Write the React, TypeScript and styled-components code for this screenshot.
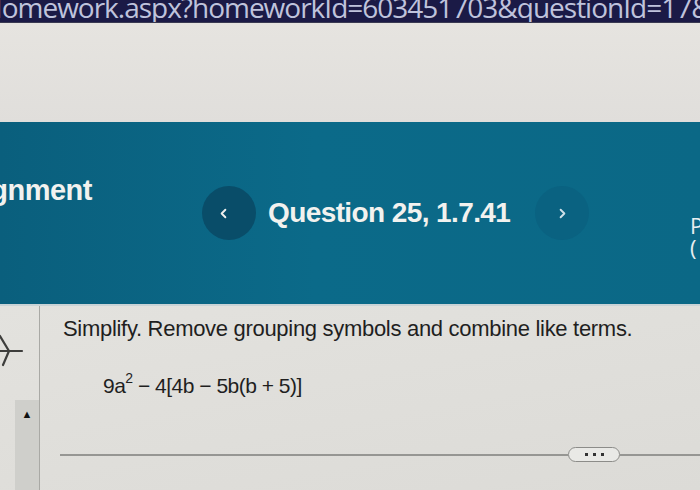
import styled, { createGlobalStyle } from 'styled-components'
import { ChevronLeft, ChevronRight } from 'lucide-react'

const GlobalStyle = createGlobalStyle`
	html, body {
		margin: 0;
		padding: 0;
	}
	body {
		width: 700px;
		height: 490px;
		overflow: hidden;
		background: #dfded9;
		font-family: 'Liberation Sans', Arial, sans-serif;
	}
`

export default function App() {
	return (
		<Root>
			<GlobalStyle />
			<UrlBar>
				<UrlText>Homework.aspx?homeworkId=603451703&amp;questionId=17&amp;flushed</UrlText>
			</UrlBar>
			<GrayBand />
			<Banner>
				<Title>Assignment</Title>
				<Nav>
					<NavButton $active>
						<ChevronLeft size={15} strokeWidth={3} />
					</NavButton>
					<QuestionTitle>Question 25, 1.7.41</QuestionTitle>
					<NavButton>
						<ChevronRight size={15} strokeWidth={3} />
					</NavButton>
				</Nav>
				<EdgeInfo>P (</EdgeInfo>
			</Banner>
			<Body>
				<Sidebar>
					<BackArrow width="24" height="34" viewBox="0 0 24 34">
						<path d="M0 2 L9 17 L3 31 M0 17 L22 17" fill="none" stroke="#3e3e3c" strokeWidth="2.2" strokeLinecap="round" />
					</BackArrow>
					<Track>
						<TrackArrow>▲</TrackArrow>
					</Track>
				</Sidebar>
				<Content>
					<Prompt>Simplify. Remove grouping symbols and combine like terms.</Prompt>
					<Expression>
						9a<sup>2</sup> − 4[4b − 5b(b + 5)]
					</Expression>
					<Divider>
						<Rule />
						<MoreButton>
							<Dot />
							<Dot />
							<Dot />
						</MoreButton>
						<Rule $tail />
					</Divider>
				</Content>
			</Body>
		</Root>
	)
}

const Root = styled.div`
	width: 700px;
	height: 490px;
	display: flex;
	flex-direction: column;
	overflow: hidden;
`

const UrlBar = styled.div`
	height: 22px;
	flex-shrink: 0;
	background: #1b1a46;
	overflow: hidden;
	border-bottom: 1px solid #3a3a52;
`

const UrlText = styled.div`
	margin: -7px 0 0 0;
	text-indent: -18px;
	font-family: 'Open Sans', sans-serif;
	font-size: 28px;
	line-height: 28px;
	letter-spacing: -1px;
	white-space: nowrap;
	color: #bfc3dc;
`

const GrayBand = styled.div`
	height: 99px;
	flex-shrink: 0;
	background: linear-gradient(180deg, #e6e4e0, #e0dedb);
`

const Banner = styled.div`
	height: 182px;
	flex-shrink: 0;
	display: flex;
	align-items: flex-start;
	background: linear-gradient(90deg, #0a5f7d, #0b6a89 45%, #0b6886);
	color: #f2f2ef;
	overflow: hidden;
	border-bottom: 2px solid #c9d3d6;
`

const Title = styled.div`
	width: 202px;
	flex-shrink: 0;
	margin-top: 52px;
	text-indent: -69px;
	font-size: 29px;
	line-height: 32px;
	font-weight: 700;
	letter-spacing: -0.5px;
	white-space: nowrap;
	overflow: hidden;
`

const Nav = styled.div`
	display: flex;
	align-items: center;
	margin-top: 64px;
`

const NavButton = styled.div<{ $active?: boolean }>`
	width: 54px;
	height: 54px;
	border-radius: 50%;
	display: flex;
	align-items: center;
	justify-content: center;
	background: ${(p) => (p.$active ? '#094d69' : '#0a6281')};
	color: ${(p) => (p.$active ? '#f0f0ee' : '#cfe0e8')};
	svg {
		margin-left: ${(p) => (p.$active ? '-12px' : '0')};
	}
`

const QuestionTitle = styled.div`
	margin: 0 25px 0 12px;
	font-size: 28px;
	line-height: 32px;
	font-weight: 700;
	letter-spacing: -0.6px;
	white-space: nowrap;
`

const EdgeInfo = styled.div`
	margin: 92px 0 0 auto;
	width: 10px;
	padding-left: 2px;
	font-family: 'Open Sans', sans-serif;
	font-size: 22px;
	line-height: 22px;
	color: #e8eef0;
	word-break: break-all;
`

const Body = styled.div`
	flex: 1;
	display: flex;
	background: linear-gradient(170deg, #e3e2de, #dcdbd7);
`

const Sidebar = styled.div`
	width: 39px;
	flex-shrink: 0;
	display: flex;
	flex-direction: column;
	border-right: 1px solid #a9a9a5;
`

const BackArrow = styled.svg`
	margin-top: 28px;
	display: block;
`

const Track = styled.div`
	margin: 32px 0 0 15px;
	flex: 1;
	background: #cfcfcb;
	display: flex;
	justify-content: center;
`

const TrackArrow = styled.span`
	margin-top: 8px;
	font-size: 11px;
	line-height: 12px;
	color: #111;
`

const Content = styled.div`
	flex: 1;
	display: flex;
	flex-direction: column;
	padding: 10px 0 0 23px;
	color: #1f1f1f;
`

const Prompt = styled.div`
	font-size: 22px;
	line-height: 26px;
	letter-spacing: -0.3px;
	white-space: nowrap;
`

const Expression = styled.div`
	margin: 31px 0 0 40px;
	font-size: 21px;
	line-height: 26px;
	letter-spacing: -0.5px;
	white-space: nowrap;
	sup {
		font-size: 14px;
		line-height: 0;
		vertical-align: 10px;
	}
`

const Divider = styled.div`
	margin: 48px 0 0 -3px;
	display: flex;
	align-items: center;
`

const Rule = styled.div<{ $tail?: boolean }>`
	height: 2px;
	background: #969693;
	${(p) => (p.$tail ? 'width: 80px;' : 'flex: 1;')}
`

const MoreButton = styled.div`
	width: 50px;
	height: 13px;
	border: 1.5px solid #8c8c89;
	border-radius: 8px;
	background: #e9e9e6;
	display: flex;
	align-items: center;
	justify-content: center;
	gap: 5px;
`

const Dot = styled.span`
	width: 3px;
	height: 3px;
	background: #333;
`
